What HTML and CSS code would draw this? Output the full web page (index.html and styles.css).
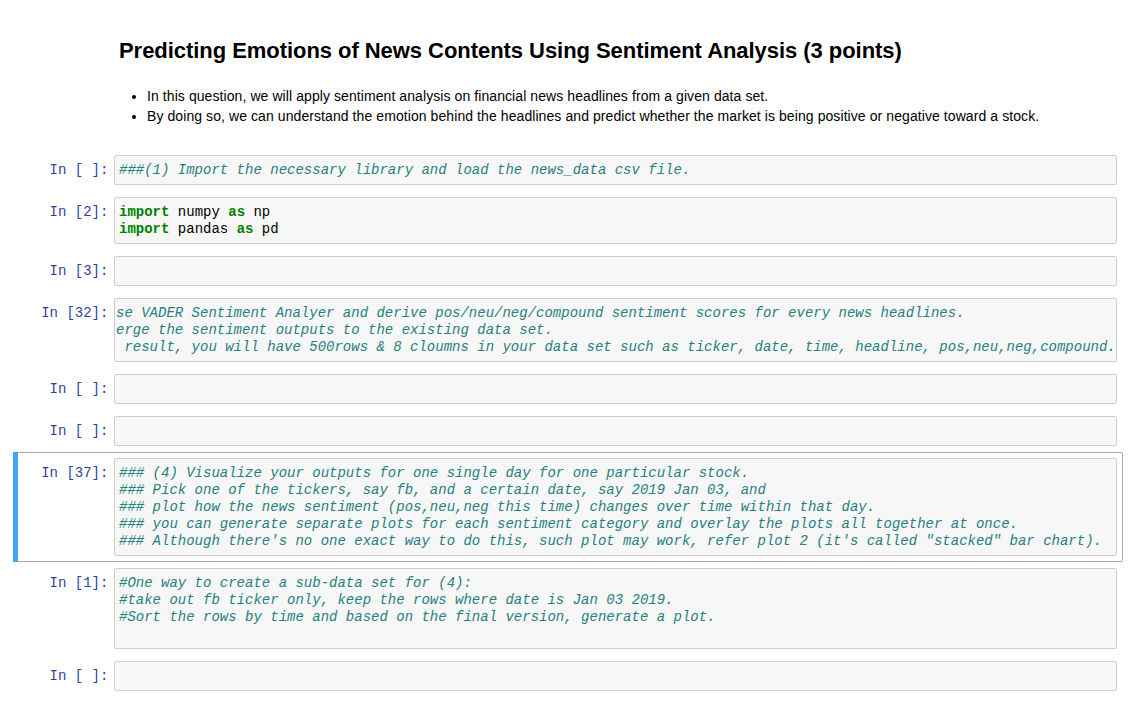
FILE: index.html
```html
<!DOCTYPE html>
<html>
<head>
<meta charset="utf-8">
<link rel="stylesheet" href="styles.css">
</head>
<body>
<div class="notebook">
  <div class="cell text-cell">
    <div class="prompt"></div>
    <div class="rendered">
      <h2>Predicting Emotions of News Contents Using Sentiment Analysis (3 points)</h2>
      <ul>
        <li>In this question, we will apply sentiment analysis on financial news headlines from a given data set.</li>
        <li>By doing so, we can understand the emotion behind the headlines and predict whether the market is being positive or negative toward a stock.</li>
      </ul>
    </div>
  </div>

  <div class="cell">
    <div class="prompt">In&nbsp;[&nbsp;]:</div>
    <div class="input-area"><pre class="code"><span class="cm">###(1) Import the necessary library and load the news_data csv file.</span></pre></div>
  </div>

  <div class="cell">
    <div class="prompt">In&nbsp;[2]:</div>
    <div class="input-area"><pre class="code"><span class="kw">import</span> numpy <span class="kw">as</span> np
<span class="kw">import</span> pandas <span class="kw">as</span> pd</pre></div>
  </div>

  <div class="cell">
    <div class="prompt">In&nbsp;[3]:</div>
    <div class="input-area"><pre class="code empty"></pre></div>
  </div>

  <div class="cell">
    <div class="prompt">In&nbsp;[32]:</div>
    <div class="input-area"><pre class="code scrolled"><span class="cm">se VADER Sentiment Analyer and derive pos/neu/neg/compound sentiment scores for every news headlines.</span>
<span class="cm">erge the sentiment outputs to the existing data set.</span>
<span class="cm"> result, you will have 500rows &amp; 8 cloumns in your data set such as ticker, date, time, headline, pos,neu,neg,compound.</span></pre></div>
  </div>

  <div class="cell">
    <div class="prompt">In&nbsp;[&nbsp;]:</div>
    <div class="input-area"><pre class="code empty"></pre></div>
  </div>

  <div class="cell">
    <div class="prompt">In&nbsp;[&nbsp;]:</div>
    <div class="input-area"><pre class="code empty"></pre></div>
  </div>

  <div class="cell selected">
    <div class="prompt">In&nbsp;[37]:</div>
    <div class="input-area"><pre class="code"><span class="cm">### (4) Visualize your outputs for one single day for one particular stock.</span>
<span class="cm">### Pick one of the tickers, say fb, and a certain date, say 2019 Jan 03, and</span>
<span class="cm">### plot how the news sentiment (pos,neu,neg this time) changes over time within that day.</span>
<span class="cm">### you can generate separate plots for each sentiment category and overlay the plots all together at once.</span>
<span class="cm">### Although there's no one exact way to do this, such plot may work, refer plot 2 (it's called "stacked" bar chart).</span></pre></div>
  </div>

  <div class="cell">
    <div class="prompt">In&nbsp;[1]:</div>
    <div class="input-area"><pre class="code four"><span class="cm">#One way to create a sub-data set for (4):</span>
<span class="cm">#take out fb ticker only, keep the rows where date is Jan 03 2019.</span>
<span class="cm">#Sort the rows by time and based on the final version, generate a plot.</span></pre></div>
  </div>

  <div class="cell">
    <div class="prompt">In&nbsp;[&nbsp;]:</div>
    <div class="input-area"><pre class="code empty"></pre></div>
  </div>
</div>
</body>
</html>
```

FILE: styles.css
```css
html, body {
  margin: 0;
  padding: 0;
  background: #ffffff;
}

body {
  font-family: "Liberation Sans", Arial, Helvetica, sans-serif;
  font-size: 14px;
  color: #000000;
}

.notebook {
  margin: 0 13px;
  padding-top: 23px;
}

.cell {
  position: relative;
  display: flex;
  border: 1px solid transparent;
  border-radius: 2px;
  padding: 5px;
}

.cell.selected {
  border-color: #ababab;
}

.cell.selected::before {
  content: "";
  position: absolute;
  top: -1px;
  left: -1px;
  width: 5px;
  height: calc(100% + 2px);
  background: #42a5f5;
}

.prompt {
  flex: none;
  width: 95px;
  box-sizing: border-box;
  padding: 7px 5.6px 0 0;
  text-align: right;
  font-family: "Liberation Mono", "Courier New", monospace;
  font-size: 14px;
  line-height: 17px;
  color: #303f9f;
  white-space: nowrap;
}

.input-area {
  flex: 1;
  min-width: 0;
  border: 1px solid #cfcfcf;
  border-radius: 2px;
  background: #f7f7f7;
  overflow: hidden;
}

.code {
  margin: 0;
  padding: 6px 4px 5px 4px;
  font-family: "Liberation Mono", "Courier New", monospace;
  font-size: 14px;
  line-height: 17px;
  color: #000000;
  white-space: pre;
  overflow: hidden;
}

.code.empty {
  min-height: 17px;
}

.code.four {
  min-height: 68px;
}

.code.scrolled {
  padding-left: 1px;
}

.cm {
  color: #267f7f;
  font-style: italic;
}

.kw {
  color: #008000;
  font-weight: bold;
}

.text-cell .rendered {
  flex: 1;
  padding: 8px 5px 17px 5px;
}

.rendered h2 {
  margin: 0 0 21px 0;
  font-size: 22px;
  line-height: 28px;
  font-weight: bold;
  color: #000000;
  letter-spacing: -0.05px;
}

.rendered ul {
  margin: 0;
  padding-left: 28px;
  line-height: 20px;
  letter-spacing: 0.08px;
}
```
